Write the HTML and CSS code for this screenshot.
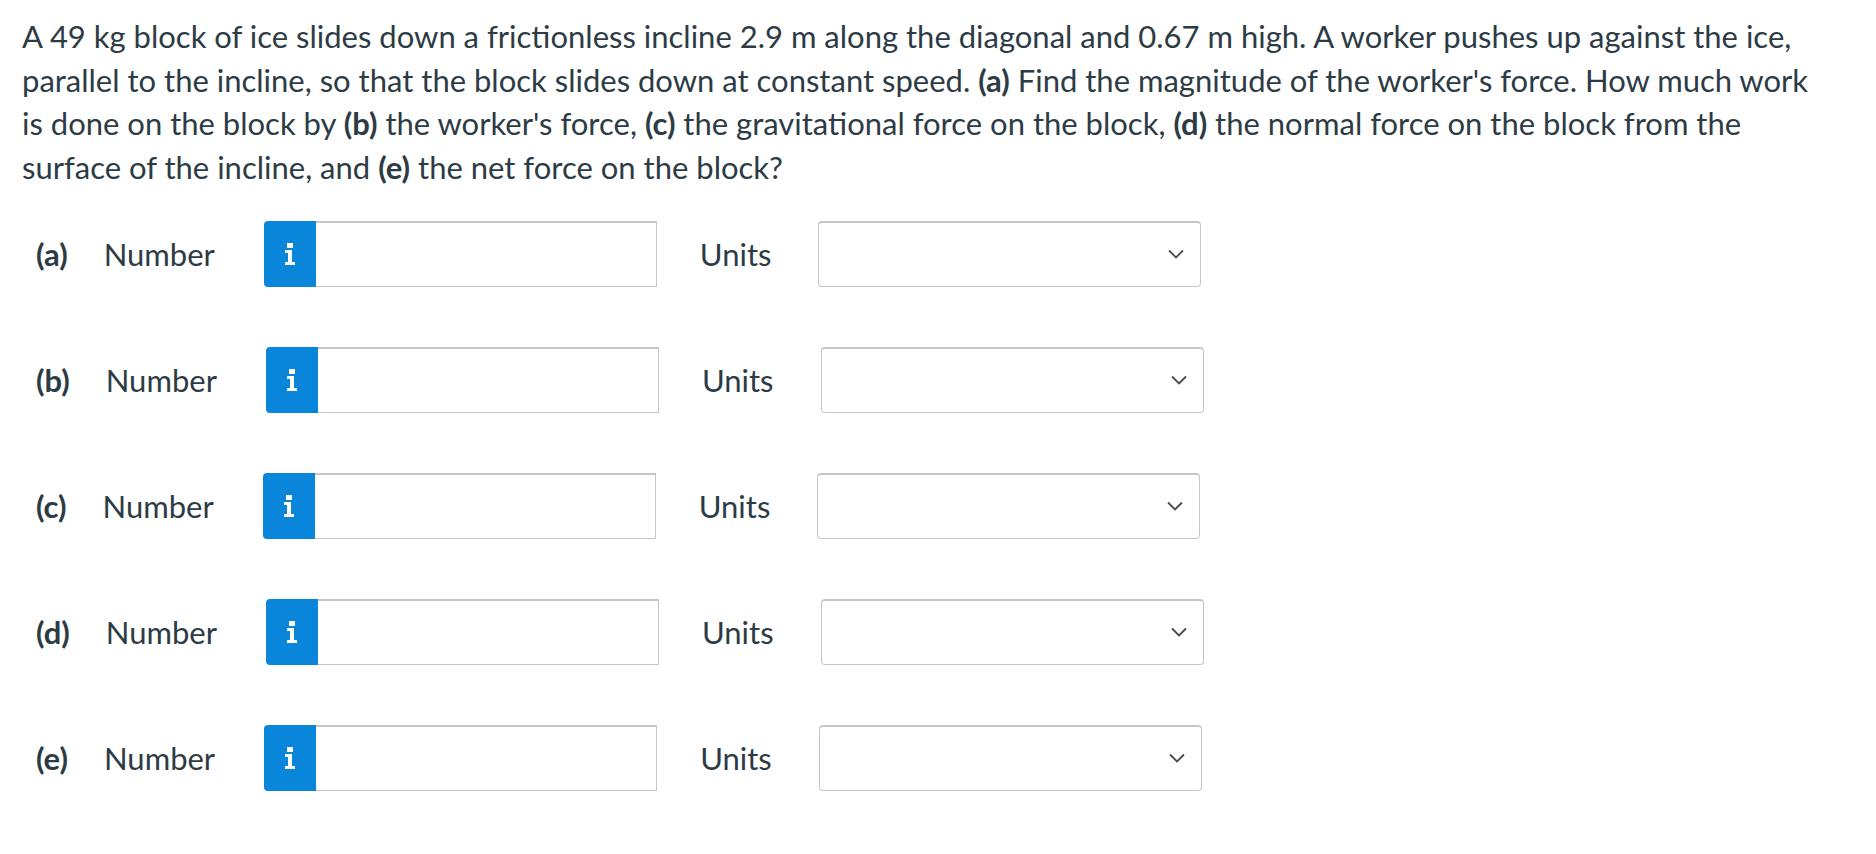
FILE: index.html
```html
<!DOCTYPE html>
<html>
<head>
<meta charset="utf-8">
<link rel="stylesheet" href="styles.css">
</head>
<body>
<div class="page">
  <p class="question">A 49 kg block of ice slides down a frictionless incline 2.9 m along the diagonal and 0.67 m high. A worker pushes up against the ice, parallel to the incline, so that the block slides down at constant speed. <b>(a)</b> Find the magnitude of the worker's force. How much work is done on the block by <b>(b)</b> the worker's force, <b>(c)</b> the gravitational force on the block, <b>(d)</b> the normal force on the block from the surface of the incline, and <b>(e)</b> the net force on the block?</p>

  <div class="answers">
    <div class="row">
      <span class="part">(a)</span>
      <span class="lbl">Number</span>
      <span class="field"><span class="info"><svg width="12" height="22" viewBox="0 0 12 22"><rect x="3" y="0" width="6" height="5" fill="#fff"/><path d="M1 7h7v12h3v3H1v-3h3v-9H1z" fill="#fff"/></svg></span><input class="num" type="text"></span>
      <span class="lbl units">Units</span>
      <span class="sel"><select class="unit-select"><option></option></select><svg class="chev" width="16" height="10" viewBox="0 0 16 10"><path d="M1 1.5l7 7 7-7" fill="none" stroke="#4a4a4a" stroke-width="1.8"/></svg></span>
    </div>
    <div class="row">
      <span class="part">(b)</span>
      <span class="lbl">Number</span>
      <span class="field"><span class="info"><svg width="12" height="22" viewBox="0 0 12 22"><rect x="3" y="0" width="6" height="5" fill="#fff"/><path d="M1 7h7v12h3v3H1v-3h3v-9H1z" fill="#fff"/></svg></span><input class="num" type="text"></span>
      <span class="lbl units">Units</span>
      <span class="sel"><select class="unit-select"><option></option></select><svg class="chev" width="16" height="10" viewBox="0 0 16 10"><path d="M1 1.5l7 7 7-7" fill="none" stroke="#4a4a4a" stroke-width="1.8"/></svg></span>
    </div>
    <div class="row">
      <span class="part">(c)</span>
      <span class="lbl">Number</span>
      <span class="field"><span class="info"><svg width="12" height="22" viewBox="0 0 12 22"><rect x="3" y="0" width="6" height="5" fill="#fff"/><path d="M1 7h7v12h3v3H1v-3h3v-9H1z" fill="#fff"/></svg></span><input class="num" type="text"></span>
      <span class="lbl units">Units</span>
      <span class="sel"><select class="unit-select"><option></option></select><svg class="chev" width="16" height="10" viewBox="0 0 16 10"><path d="M1 1.5l7 7 7-7" fill="none" stroke="#4a4a4a" stroke-width="1.8"/></svg></span>
    </div>
    <div class="row">
      <span class="part">(d)</span>
      <span class="lbl">Number</span>
      <span class="field"><span class="info"><svg width="12" height="22" viewBox="0 0 12 22"><rect x="3" y="0" width="6" height="5" fill="#fff"/><path d="M1 7h7v12h3v3H1v-3h3v-9H1z" fill="#fff"/></svg></span><input class="num" type="text"></span>
      <span class="lbl units">Units</span>
      <span class="sel"><select class="unit-select"><option></option></select><svg class="chev" width="16" height="10" viewBox="0 0 16 10"><path d="M1 1.5l7 7 7-7" fill="none" stroke="#4a4a4a" stroke-width="1.8"/></svg></span>
    </div>
    <div class="row">
      <span class="part">(e)</span>
      <span class="lbl">Number</span>
      <span class="field"><span class="info"><svg width="12" height="22" viewBox="0 0 12 22"><rect x="3" y="0" width="6" height="5" fill="#fff"/><path d="M1 7h7v12h3v3H1v-3h3v-9H1z" fill="#fff"/></svg></span><input class="num" type="text"></span>
      <span class="lbl units">Units</span>
      <span class="sel"><select class="unit-select"><option></option></select><svg class="chev" width="16" height="10" viewBox="0 0 16 10"><path d="M1 1.5l7 7 7-7" fill="none" stroke="#4a4a4a" stroke-width="1.8"/></svg></span>
    </div>
  </div>
</div>
</body>
</html>
```

FILE: styles.css
```css
html, body {
  margin: 0;
  padding: 0;
  background: #fff;
}
body {
  font-family: Lato, "Open Sans", sans-serif;
  color: #2d3b45;
}
.page {
  padding: 15px 0 0 22px;
  width: 1790px;
}
.question {
  margin: 0;
  font-size: 31px;
  line-height: 43.5px;
}
.question b {
  font-weight: 700;
}
.answers {
  margin-top: 32px;
  display: flex;
  flex-direction: column;
  gap: 60px;
}
.row {
  display: flex;
  align-items: center;
  height: 66px;
  font-size: 31px;
}
.part {
  font-weight: 700;
  margin-left: 14px;
  margin-right: 36px;
}
.lbl {
  margin-right: 49px;
}
.field {
  display: flex;
  height: 66px;
  margin-right: 43px;
}
.info {
  width: 52px;
  height: 66px;
  background: #0986da;
  border-radius: 4px 0 0 4px;
  display: flex;
  align-items: center;
  justify-content: center;
}
.num {
  box-sizing: border-box;
  width: 341px;
  height: 66px;
  margin: 0;
  border: 1px solid #c6c6c6;
  border-left: none;
  border-top-width: 2px;
  border-radius: 0;
  outline: none;
  background: #fff;
  font: inherit;
}
.units {
  margin-right: 47px;
}
.sel {
  position: relative;
  display: block;
  width: 383px;
  height: 66px;
}
.unit-select {
  appearance: none;
  -webkit-appearance: none;
  box-sizing: border-box;
  width: 383px;
  height: 66px;
  margin: 0;
  border: 1px solid #c6c6c6;
  border-top-width: 2px;
  border-radius: 4px;
  background: #fff;
  font: inherit;
  outline: none;
}
.chev {
  position: absolute;
  right: 17px;
  top: 28px;
  pointer-events: none;
}
```
